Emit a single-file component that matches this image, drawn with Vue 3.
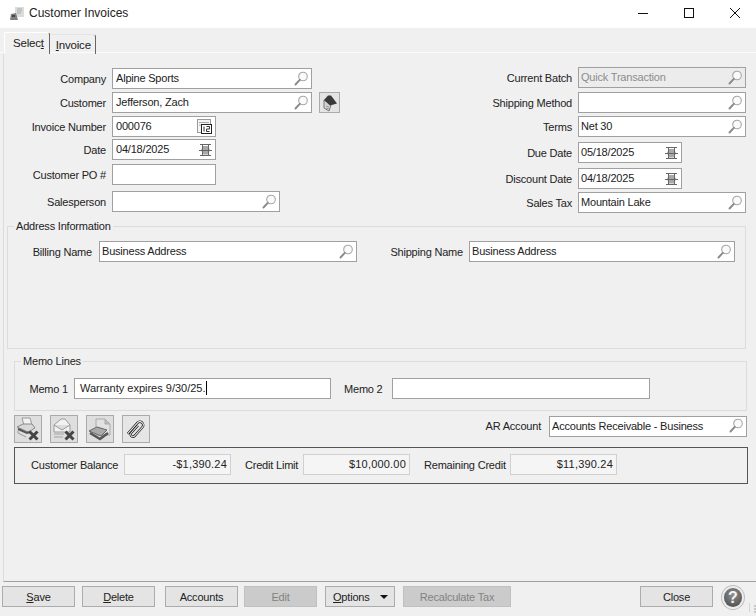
<script setup>
const leftRows = [
  { label: 'Company', value: 'Alpine Sports', kind: 'wide', icon: 'mag', cls: 'l1' },
  { label: 'Customer', value: 'Jefferson, Zach', kind: 'wide', icon: 'mag', cls: 'l2', book: true },
  { label: 'Invoice Number', value: '000076', kind: 'short', icon: 'cal12', cls: 'l3' },
  { label: 'Date', value: '04/18/2025', kind: 'short', icon: 'date', cls: 'l4' },
  { label: 'Customer PO #', value: '', kind: 'short', icon: '', cls: 'l5' },
  { label: 'Salesperson', value: '', kind: 'mid', icon: 'mag', cls: 'l6' }
]
const rightRows = [
  { label: 'Current Batch', value: 'Quick Transaction', kind: 'wide', icon: 'mag', cls: 'r1', disabled: true },
  { label: 'Shipping Method', value: '', kind: 'wide', icon: 'mag', cls: 'r2' },
  { label: 'Terms', value: 'Net 30', kind: 'wide', icon: 'mag', cls: 'r3' },
  { label: 'Due Date', value: '05/18/2025', kind: 'short', icon: 'date', cls: 'r4' },
  { label: 'Discount Date', value: '04/18/2025', kind: 'short', icon: 'date', cls: 'r5' },
  { label: 'Sales Tax', value: 'Mountain Lake', kind: 'wide', icon: 'mag', cls: 'r6' }
]
const balances = [
  { label: 'Customer Balance', value: '-$1,390.24', w: 'b1' },
  { label: 'Credit Limit', value: '$10,000.00', w: 'b2' },
  { label: 'Remaining Credit', value: '$11,390.24', w: 'b3' }
]
</script>

<template>
  <div class="win">
    <svg class="defs" width="0" height="0">
      <symbol id="mag" viewBox="0 0 16 16">
        <circle cx="10" cy="5.500" r="4.300" fill="#fafafa" stroke="#a6a6a6" stroke-width="1.100" />
        <path d="M6.800 8.800 2.500 13.500" stroke="#8a8a8a" stroke-width="1.900" stroke-linecap="round" />
      </symbol>
      <symbol id="cal12" viewBox="0 0 16 16">
        <rect x="0.500" y="0.500" width="13" height="13" fill="#f4f4f4" stroke="#999" />
        <path d="M2 3.500h10M2 6h2" stroke="#aaa" />
        <rect x="4.500" y="5.500" width="10" height="9" fill="#fff" stroke="#222" />
        <path d="M7 7.500v5M9.500 7.500h3v2.500h-3v2.500h3" fill="none" stroke="#333" />
      </symbol>
      <symbol id="date" viewBox="0 0 16 16">
        <path d="M4 8l2-4h5l2 4-2 4.500H6z" fill="#a8a8a8" />
        <path d="M3 2.500h11M2 8.500h13M3 13.500h11M5.500 2v12M11.500 2v12" stroke="#666" />
      </symbol>
    </svg>

    <header class="title">
      <svg class="appicon" viewBox="0 0 16 16" width="16" height="16">
        <path d="M6 2h9v10H6z" fill="#dcdcdc" />
        <path d="M8 4h5M8 6h5M8 8h4" stroke="#aaa" />
        <path d="M1 15l1-6 5-1 2 7z" fill="#808080" />
        <path d="M3 10h3v2H3z" fill="#444" />
      </svg>
      <span class="title-text">Customer Invoices</span>
      <div class="caption">
        <svg viewBox="0 0 12 12" width="12" height="12"><path d="M1 6.500h10" stroke="#111" /></svg>
        <svg viewBox="0 0 12 12" width="12" height="12"><rect x="1.500" y="1.500" width="9" height="9" fill="none" stroke="#111" /></svg>
        <svg viewBox="0 0 12 12" width="12" height="12"><path d="M1 1l10 10M11 1 1 11" stroke="#111" /></svg>
      </div>
    </header>

    <main class="client">
      <nav class="tabs">
        <div class="tab active">Selec<u>t</u></div>
        <div class="tab"><u>I</u>nvoice</div>
      </nav>

      <section class="panel">
        <div class="top">
          <div class="col col-l">
            <div v-for="r in leftRows" :key="r.label" class="row" :class="r.cls">
              <label class="lab lab-l">{{ r.label }}</label>
              <div class="field" :class="r.kind">
                <span class="val">{{ r.value }}</span>
                <svg v-if="r.icon" class="ic" width="16" height="16"><use :href="'#' + r.icon" /></svg>
              </div>
              <button v-if="r.book" class="bookbtn" type="button" aria-label="Customer notes">
                <svg viewBox="0 0 18 18" width="18" height="18">
                  <path d="M3 6v8l5 3 2-6-2-2z" fill="#d4d4d4" stroke="#777" />
                  <path d="M5 12l3 1M5 14l3 1" stroke="#999" />
                  <path d="M3 6 7 1.500h3l6 8-7 2z" fill="#3a3a3a" />
                </svg>
              </button>
            </div>
          </div>
          <div class="col col-r">
            <div v-for="r in rightRows" :key="r.label" class="row" :class="r.cls">
              <label class="lab lab-r">{{ r.label }}</label>
              <div class="field" :class="[r.kind === 'wide' ? 'rwide' : r.kind, { disabled: r.disabled }]">
                <span class="val">{{ r.value }}</span>
                <svg class="ic" width="16" height="16"><use :href="'#' + r.icon" /></svg>
              </div>
            </div>
          </div>
        </div>

        <fieldset class="group addr">
          <legend>Address Information</legend>
          <div class="addr-row">
            <label class="lab billing">Billing Name</label>
            <div class="field bname"><span class="val">Business Address</span><svg class="ic" width="16" height="16"><use href="#mag" /></svg></div>
            <label class="lab shipping">Shipping Name</label>
            <div class="field sname"><span class="val">Business Address</span><svg class="ic" width="16" height="16"><use href="#mag" /></svg></div>
          </div>
        </fieldset>

        <fieldset class="group memo">
          <legend>Memo Lines</legend>
          <div class="memo-row">
            <label class="lab m1l">Memo 1</label>
            <div class="field m1"><span class="val memoval">Warranty expires 9/30/25.<i class="caret"></i></span></div>
            <label class="lab m2l">Memo 2</label>
            <div class="field m2"></div>
          </div>
        </fieldset>

        <div class="tools">
          <button class="tool" type="button" aria-label="Print">
            <svg viewBox="0 0 24 24" width="24" height="24">
              <path d="M6 1h8l2 7H8z" fill="#f2f2f2" stroke="#999" />
              <path d="M1 10l6-3h9l3 4-7 4z" fill="#d8d8d8" stroke="#888" />
              <path d="M2 12l9 4 3-1" fill="none" stroke="#555" stroke-width="2" />
              <path d="M2 14v2l8 4" fill="none" stroke="#999" />
              <path d="M13.500 14.500l8 8M21.500 14.500l-8 8" stroke="#444" stroke-width="3" />
            </svg>
          </button>
          <button class="tool" type="button" aria-label="Email">
            <svg viewBox="0 0 24 24" width="24" height="24">
              <path d="M2 8l7-6h4l5 6v7H2z" fill="#f2f2f2" stroke="#9a9a9a" />
              <path d="M2 8l8 5 8-5" fill="#dcdcdc" stroke="#9a9a9a" />
              <path d="M2 17h10M2 20h9" stroke="#b8b8b8" stroke-width="1.500" />
              <path d="M13.500 14.500l8 8M21.500 14.500l-8 8" stroke="#444" stroke-width="3" />
            </svg>
          </button>
          <button class="tool" type="button" aria-label="Preview">
            <svg viewBox="0 0 24 24" width="24" height="24">
              <path d="M8 2h9l5 5v11H8z" fill="#e2e2e2" stroke="#aaa" />
              <path d="M17 2v5h5" fill="#bbb" stroke="#aaa" />
              <path d="M1 14l8-4 10 3-6 6z" fill="#aaa" stroke="#666" />
              <path d="M2 16l10 6 8-6" fill="none" stroke="#555" stroke-width="2.500" />
            </svg>
          </button>
          <button class="tool clipbtn" type="button" aria-label="Attach">
            <svg viewBox="0 0 24 24" width="24" height="24">
              <g transform="rotate(42 12 12)">
                <path d="M9 21V6.500a3.300 3.300 0 0 1 6.600 0V18a2.300 2.300 0 0 1-4.600 0V8" fill="none" stroke="#111" stroke-width="2.400" />
                <path d="M9 21V6.500a3.300 3.300 0 0 1 6.600 0V18a2.300 2.300 0 0 1-4.600 0V8" fill="none" stroke="#f0f0f0" stroke-width="1" />
              </g>
            </svg>
          </button>
          <label class="lab arl">AR Account</label>
          <div class="field ar"><span class="val">Accounts Receivable - Business</span><svg class="ic" width="16" height="16"><use href="#mag" /></svg></div>
        </div>

        <div class="balance">
          <template v-for="b in balances" :key="b.label">
            <label class="lab" :class="b.w">{{ b.label }}</label>
            <div class="amount">{{ b.value }}</div>
          </template>
        </div>
      </section>

      <footer class="foot">
        <button class="btn" type="button"><u>S</u>ave</button>
        <button class="btn gap7" type="button"><u>D</u>elete</button>
        <button class="btn gap10" type="button">Accounts</button>
        <button class="btn gap6 off" type="button">Edit</button>
        <button class="btn opt gap8" type="button"><span><u>O</u>ptions</span><i class="tri"></i></button>
        <button class="btn rec gap8 off" type="button">Recalculate Tax</button>
        <button class="btn close" type="button">Close</button>
        <div class="help">?</div>
        <svg class="grip" viewBox="0 0 7 34" width="7" height="34">
          <path d="M0.500 21v9" stroke="#d4d4d4" />
          <path d="M5 23h2v2H5zM5 26h2v2H5zM5 29h2v2H5z" fill="#c8c8c8" />
        </svg>
      </footer>
    </main>
  </div>
</template>

<style>
html, body { margin: 0; background: #f0f0f0; }
</style>

<style scoped>
.win {
  width: 756px;
  height: 616px;
  overflow: hidden;
  display: flex;
  flex-direction: column;
  background: #f0f0f0;
  font-family: "Liberation Sans", Arial, sans-serif;
  font-size: 11px;
  letter-spacing: -0.2px;
  color: #111;
}
.defs { position: absolute; }
.title {
  height: 28px;
  flex: none;
  background: #fff;
  display: flex;
  align-items: center;
  padding: 0 0 3px 9px;
  box-sizing: border-box;
}
.appicon { margin-right: 4px; }
.title-text { font-size: 12px; letter-spacing: 0; color: #222; }
.caption { margin-left: auto; display: flex; gap: 34px; padding-right: 15px; }

.client { flex: 1; display: flex; flex-direction: column; min-height: 0; }
.tabs { height: 25px; flex: none; display: flex; padding: 5px 0 0 4px; box-sizing: border-box; border-bottom: 1px solid #fbfbfb; font-size: 11.500px; }
.tab {
  height: 20px;
  line-height: 20px;
  padding: 0 4px 0 6px;
  border-right: 1px solid #666;
  border-top: 1px solid #e4e4e4;
  border-top-right-radius: 3px;
  box-sizing: border-box;
  color: #222;
  margin-top: 1px;
}
.tab.active { padding: 0 5px 0 8px; margin-top: -1px; height: 22px; background: #f0f0f0; border-left: 1px solid #fff; border-top: 1px solid #fff; }

.panel {
  flex: 1;
  min-height: 0;
  margin-left: 3px;
  border-left: 1px solid #dcdcdc;
  border-bottom: 1px solid #a0a0a0;
  padding-left: 3px;
  display: flex;
  flex-direction: column;
}
.top { display: flex; height: 166px; flex: none; }
.col { width: 372px; flex: none; }
.col-r { width: 372px; }
.row { display: flex; align-items: center; height: 21px; }
.l1 { margin-top: 15px; } .l2 { margin-top: 3px; } .l3 { margin-top: 3px; } .l4 { margin-top: 2px; } .l5 { margin-top: 4px; } .l6 { margin-top: 6px; }
.r1 { margin-top: 14px; } .r2 { margin-top: 4px; } .r3 { margin-top: 3px; } .r4 { margin-top: 5px; } .r5 { margin-top: 5px; } .r6 { margin-top: 3px; }

.lab { white-space: nowrap; color: #222; }
.lab-l { width: 99px; text-align: right; margin-right: 6px; }
.lab-r { width: 193px; text-align: right; margin-right: 6px; }

.field {
  height: 21px;
  box-sizing: border-box;
  border: 1px solid #a0a0a0;
  background: #fff;
  display: flex;
  align-items: center;
  padding: 0 2px 0 2px;
  flex: none;
}
.col-l .field { padding-left: 3px; }
.val { flex: 1; white-space: nowrap; color: #222; margin-top: -1px; }
.ic { flex: none; }
.wide { width: 200px; }
.rwide { width: 168px; }
.short { width: 104px; }
.mid { width: 168px; }
.disabled { background: #ececec; }
.disabled .val { color: #8c8c8c; }
.bookbtn {
  width: 21px; height: 21px; margin-left: 7px; padding: 0;
  border: 1px solid #aaa; background: #e4e4e4;
  display: flex; align-items: center; justify-content: center;
}

.group { margin: 0; border: 1px solid #dcdcdc; padding: 0; box-sizing: border-box; min-width: 0; }
.group legend { padding: 0 2px; color: #222; font-size: 11px; line-height: 14px; }
.addr { height: 130px; width: 739px; flex: none; }
.addr legend { margin-left: 6px; }
.addr-row { display: flex; align-items: center; margin-top: 8px; }
.billing { width: 84px; text-align: right; margin-right: 7px; }
.bname { width: 258px; }
.shipping { width: 106px; text-align: right; margin-right: 6px; }
.sname { width: 266px; }

.memo { height: 57px; width: 733px; flex: none; margin: 5px 0 0 7px; }
.memo legend { margin-left: 6px; }
.memo-row { display: flex; align-items: center; margin-top: 10px; }
.m1l { width: 53px; text-align: right; margin-right: 6px; }
.m1 { width: 257px; height: 21px; }
.memoval { padding-left: 3px; letter-spacing: 0; }
.caret { display: inline-block; width: 1px; height: 14px; background: #000; vertical-align: -3px; }
.m2l { margin-left: 13px; width: 42px; margin-right: 6px; }
.m2 { width: 258px; }

.tools { display: flex; align-items: center; margin: 4px 0 0 7px; height: 28px; flex: none; }
.tool {
  width: 28px; height: 28px; padding: 0; margin-right: 8px;
  border: 1px solid #aaa; background: #dedede;
  display: flex; align-items: center; justify-content: center;
}
.clipbtn { background: #e6e6e6; }
.arl { margin-left: 325px; width: 58px; text-align: right; margin-right: 8px; margin-bottom: 6px; }
.ar { width: 198px; margin-bottom: 6px; }

.balance {
  margin: 4px 0 0 7px;
  width: 734px;
  height: 37px;
  box-sizing: border-box;
  border: 1px solid #555;
  display: flex;
  align-items: center;
  padding: 0 0 2px 16px;
  flex: none;
}
.b1 { width: 86px; margin-right: 7px; }
.b2 { width: 52px; margin: 0 6px 0 14px; }
.b3 { width: 80px; margin: 0 6px 0 14px; }
.amount {
  width: 107px;
  height: 21px;
  box-sizing: border-box;
  border: 1px solid #d0d0d0;
  background: #f5f5f5;
  text-align: right;
  line-height: 18px;
  padding-right: 3px;
  color: #222;
  letter-spacing: 0.2px;
}

.foot { height: 34px; flex: none; display: flex; align-items: flex-start; padding: 4px 0 0 2px; box-sizing: border-box; }
.btn {
  width: 73px; height: 21px; padding: 0;
  border: 1px solid #acacac;
  background: #e4e4e4;
  font: inherit;
  letter-spacing: inherit;
  color: #222;
  flex: none;
}
.gap7 { margin-left: 7px; }
.gap10 { margin-left: 10px; }
.gap6 { margin-left: 6px; }
.gap8 { margin-left: 8px; }
.off { background: #cbcbcb; border-color: #c0c0c0; color: #838383; }
.opt { width: 70px; display: flex; align-items: center; padding-left: 7px; }
.tri { width: 0; height: 0; border: 4px solid transparent; border-top: 4px solid #111; border-bottom: 0; margin-left: 10px; }
.rec { width: 108px; }
.close { margin-left: 129px; }
.help {
  width: 19px; height: 19px; margin: 2px 0 0 11px; border-radius: 50%;
  background: radial-gradient(circle at 50% 35%, #8f8f8f, #444);
  box-shadow: 0 0 0 2px #ececec, 0 0 0 3px #bdbdbd;
  color: #f4f4f4; font-weight: 700; font-size: 16px; line-height: 19px; text-align: center; letter-spacing: 0;
}
.grip { margin: -4px 0 0 7px; flex: none; }
</style>
